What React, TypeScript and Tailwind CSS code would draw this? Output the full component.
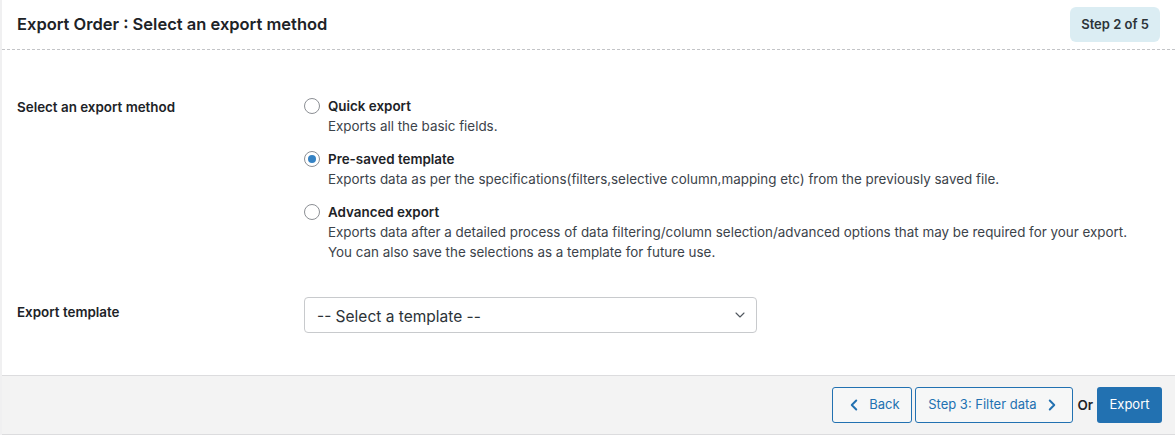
import { ChevronDown, ChevronLeft, ChevronRight } from 'lucide-react'

const methods = [
  {
    id: 'quick',
    title: 'Quick export',
    desc: ['Exports all the basic fields.'],
  },
  {
    id: 'template',
    title: 'Pre-saved template',
    desc: [
      'Exports data as per the specifications(filters,selective column,mapping etc) from the previously saved file.',
    ],
  },
  {
    id: 'advanced',
    title: 'Advanced export',
    desc: [
      'Exports data after a detailed process of data filtering/column selection/advanced options that may be required for your export.',
      'You can also save the selections as a template for future use.',
    ],
  },
]

function Radio({ checked }: { checked: boolean }) {
  return (
    <span className="mt-[2px] flex h-4 w-4 shrink-0 items-center justify-center rounded-full border border-[#8c8f94] bg-white">
      {checked && <span className="h-2 w-2 rounded-full bg-[#3582c4]" />}
    </span>
  )
}

export default function App() {
  const selected = 'template'

  return (
    <div
      className="h-[435px] w-full bg-[#f0f0f1] pl-[2px] text-[13.4px] text-[#3c434a]"
      style={{ fontFamily: 'Inter, "Noto Sans", sans-serif' }}
    >
      <div className="flex h-full flex-col bg-white">
        <div className="flex h-[50px] items-center justify-between border-b border-dashed border-[#c3c4c7] pl-[15px] pr-[15px]">
          <h2 className="text-[16.5px] font-semibold text-[#1d2327]">Export Order : Select an export method</h2>
          <span className="rounded-[6px] bg-[#dbedf3] px-[11px] py-[8px] text-[13px] font-semibold text-[#2c3338]">
            Step 2 of 5
          </span>
        </div>

        <div className="flex-1 pt-[46px]">
          <div className="flex">
            <div className="w-[302px] shrink-0 pl-[15px] pt-[1px] font-semibold leading-5 text-[#1d2327]">
              Select an export method
            </div>
            <div className="flex flex-col gap-[13px]">
              {methods.map((m) => (
                <label key={m.id} className="flex gap-[8px]">
                  <Radio checked={m.id === selected} />
                  <div className="leading-5">
                    <div className="font-semibold text-[#1d2327]">{m.title}</div>
                    {m.desc.map((d) => (
                      <div key={d}>{d}</div>
                    ))}
                  </div>
                </label>
              ))}
            </div>
          </div>

          <div className="mt-[35px] flex items-start">
            <div className="w-[302px] shrink-0 pl-[15px] pt-[5px] font-semibold text-[#1d2327]">Export template</div>
            <div className="flex h-[36px] w-[453px] items-center justify-between rounded-[4px] border border-[#c8cacd] bg-white pl-[12px] pr-[8px] text-[15.5px] text-[#2c3338]">
              <span className="pt-[4px]">-- Select a template --</span>
              <ChevronDown size={16} strokeWidth={1.6} className="text-[#50575e]" />
            </div>
          </div>
        </div>

        <div className="flex h-[60px] items-center justify-end gap-[3px] border-y border-[#dcdcde] bg-[#f3f3f3] pr-[13px]">
          <button className="flex h-[36px] w-[80px] items-center justify-center gap-[6px] rounded-[3px] border border-[#2271b1] bg-[#f6f7f7] text-[13px] text-[#2271b1]">
            <ChevronLeft size={18} strokeWidth={2.6} />
            Back
          </button>
          <button className="flex h-[36px] w-[158px] items-center justify-center gap-[6px] rounded-[3px] border border-[#2271b1] bg-[#f6f7f7] text-[13px] text-[#2271b1]">
            Step 3: Filter data
            <ChevronRight size={18} strokeWidth={2.6} />
          </button>
          <span className="px-[1px] font-semibold text-[#1d2327]">Or</span>
          <button className="h-[36px] w-[65px] rounded-[3px] bg-[#2271b1] text-[13px] text-white">Export</button>
        </div>
      </div>
    </div>
  )
}
